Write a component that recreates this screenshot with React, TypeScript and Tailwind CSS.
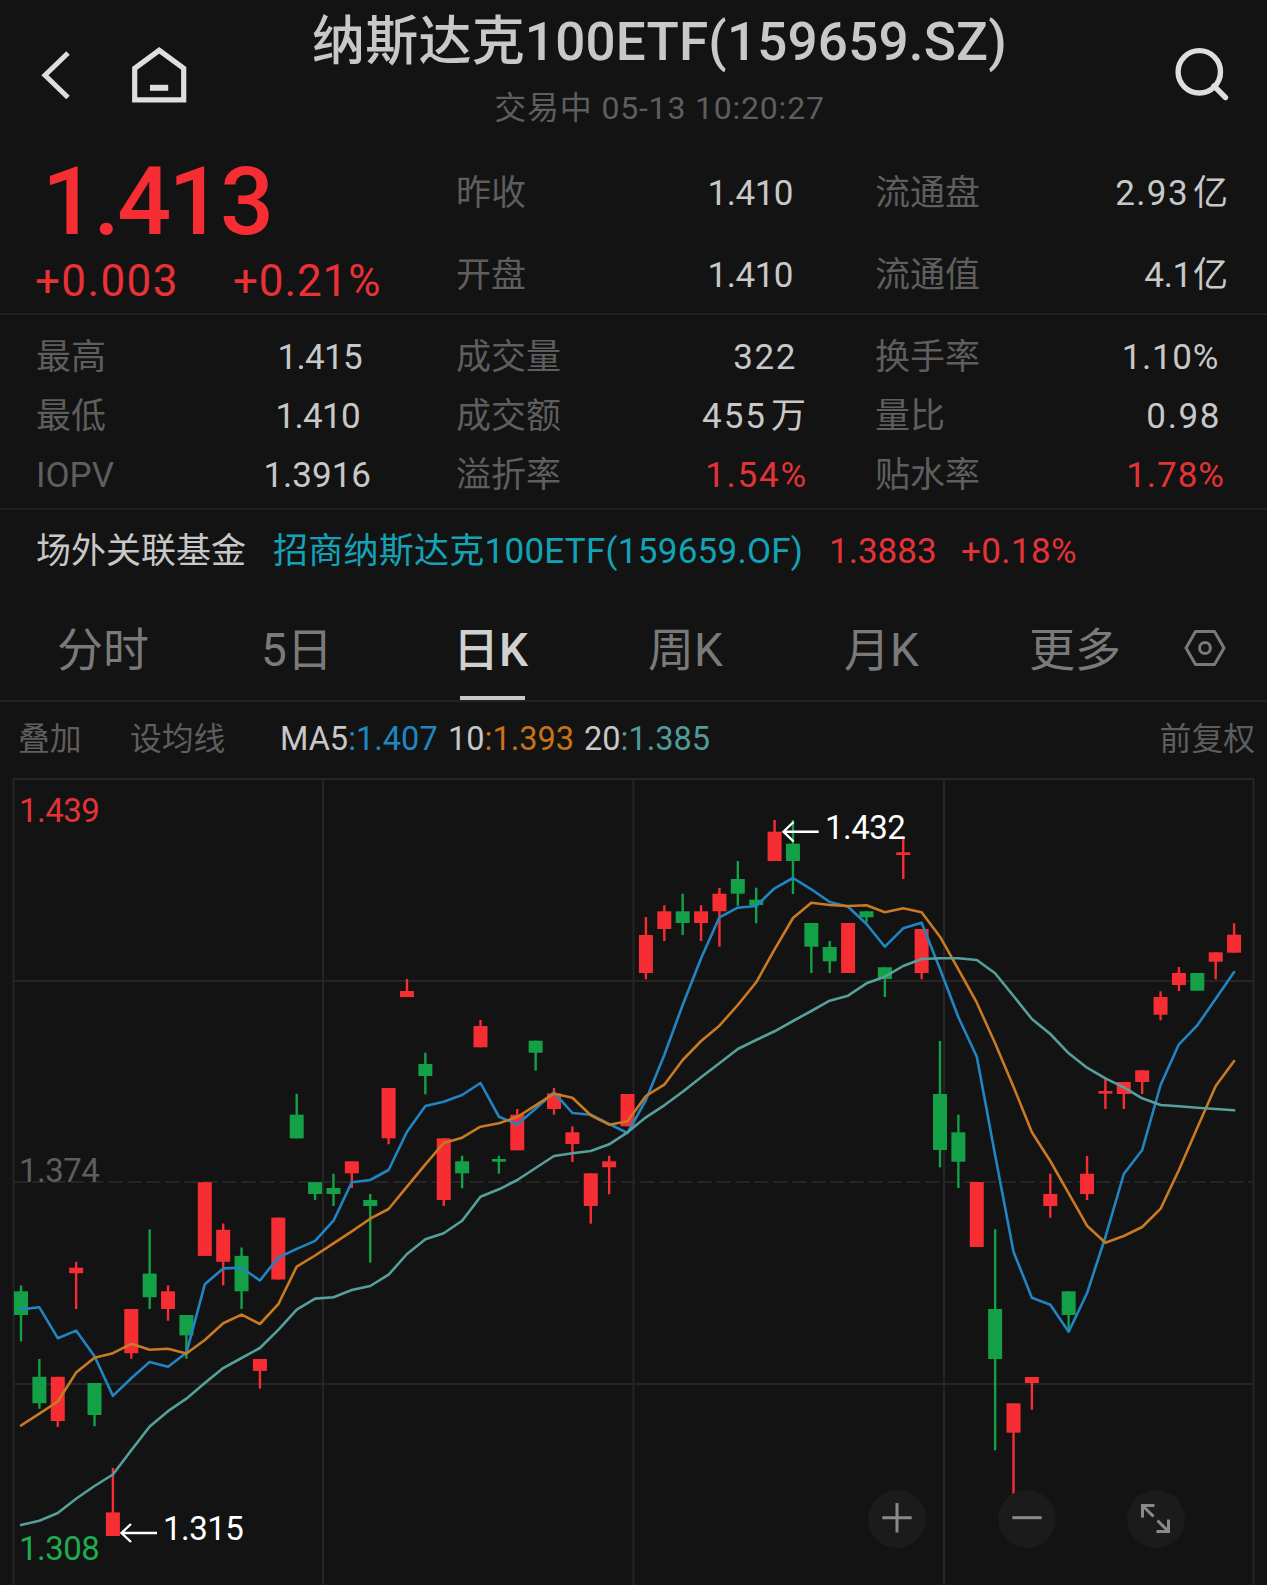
import { clsx } from "clsx";

type Tone = "plain" | "up";

interface Quote {
    label: string;
    value: string;
    unit?: string;
    unitGap?: string;
    tone?: Tone;
    pad: string;
    tracking?: string;
}

// Two rows next to the last price
const mainQuotes: Quote[] = [
    { label: "昨收", value: "1.410", pad: "pr-[82px]", tracking: "tracking-[-0.5px]" },
    { label: "流通盘", value: "2.93", unit: "亿", unitGap: "ml-[4px]", pad: "pr-[39px]", tracking: "tracking-[1.4px]" },
    { label: "开盘", value: "1.410", pad: "pr-[82px]", tracking: "tracking-[-0.5px]" },
    { label: "流通值", value: "4.1", unit: "亿", unitGap: "ml-px", pad: "pr-[39px]", tracking: "tracking-[-0.3px]" },
];

const detailQuotes: Quote[] = [
    { label: "最高", value: "1.415", pad: "pr-[94px]", tracking: "tracking-[-0.7px]" },
    { label: "成交量", value: "322", pad: "pr-[78px]", tracking: "tracking-[1.6px]" },
    { label: "换手率", value: "1.10%", pad: "pr-[48px]", tracking: "tracking-[0.7px]" },
    { label: "最低", value: "1.410", pad: "pr-[96px]", tracking: "tracking-[-0.7px]" },
    { label: "成交额", value: "455", unit: "万", unitGap: "ml-[4px]", pad: "pr-[69px]", tracking: "tracking-[2px]" },
    { label: "量比", value: "0.98", pad: "pr-[46px]", tracking: "tracking-[1.6px]" },
    { label: "IOPV", value: "1.3916", pad: "pr-[85px]" },
    { label: "溢折率", value: "1.54%", tone: "up", pad: "pr-[67px]", tracking: "tracking-[1.8px]" },
    { label: "贴水率", value: "1.78%", tone: "up", pad: "pr-[42px]", tracking: "tracking-[1px]" },
];

const tabs = [
    { label: "分时", width: "w-[204px]" },
    { label: "5日", width: "w-[195px]" },
    { label: "日K", width: "w-[192px]", active: true },
    { label: "周K", width: "w-[196px]" },
    { label: "月K", width: "w-[185px]" },
    { label: "更多", width: "w-[154px]" },
];

const RED = "#f62d33";
const GREEN = "#14a046";

// [rising, high, body top, body bottom, low]
type Candle = [number, number, number, number, number];

const candles: Candle[] = [
    [0, 1285.4, 1291.3, 1315, 1341.4],
    [0, 1359, 1376.8, 1403.2, 1408.8],
    [1, 1376.8, 1376.8, 1421, 1426.9],
    [1, 1261.8, 1267.7, 1273.2, 1309],
    [0, 1383, 1383, 1415, 1426.2],
    [1, 1467.9, 1512.4, 1536, 1536],
    [1, 1309, 1309, 1353.2, 1358.7],
    [0, 1229.4, 1273.6, 1297.2, 1309],
    [1, 1285.4, 1291.3, 1309, 1320.8],
    [0, 1315, 1315, 1335.4, 1358.7],
    [1, 1182.2, 1182.2, 1255.9, 1255.9],
    [1, 1223.5, 1229.8, 1261.8, 1285.4],
    [0, 1247.5, 1255.9, 1291.3, 1309],
    [1, 1359, 1359, 1370.9, 1388.6],
    [1, 1217.6, 1217.6, 1279.5, 1279.5],
    [0, 1093.9, 1114.7, 1138.4, 1138.4],
    [0, 1182.2, 1182.2, 1194, 1199.9],
    [0, 1173.7, 1188, 1194, 1206],
    [1, 1161.3, 1161.3, 1173.3, 1188],
    [0, 1194, 1200, 1206, 1262.7],
    [1, 1088, 1088, 1138.3, 1144.3],
    [1, 979, 991, 997, 997],
    [0, 1052.7, 1064, 1076, 1094.3],
    [1, 1138.3, 1138.3, 1200, 1206],
    [0, 1155.7, 1161.3, 1173.3, 1188.3],
    [1, 1020, 1026, 1047.3, 1047.3],
    [0, 1155.7, 1159, 1161.7, 1173.7],
    [1, 1109, 1114.7, 1150.3, 1150.3],
    [0, 1040.7, 1040.7, 1052.7, 1070.7],
    [1, 1088, 1093.3, 1109, 1114.7],
    [1, 1126.3, 1132.3, 1144, 1162],
    [1, 1173.3, 1173.3, 1206, 1223.7],
    [1, 1155.7, 1161.3, 1167.3, 1194.3],
    [1, 1094, 1094, 1126.3, 1126.3],
    [1, 917, 935, 973, 979.3],
    [1, 905.3, 911.3, 929, 941],
    [0, 893.7, 911.3, 923, 935],
    [1, 905.3, 911.3, 923, 941],
    [1, 888, 893.7, 911.3, 946.7],
    [0, 861, 879, 893.7, 905.7],
    [0, 887.7, 899.7, 905, 923.3],
    [1, 820, 831.7, 861, 861],
    [0, 820, 843.7, 861, 894],
    [0, 923, 923, 946.7, 973],
    [0, 941, 947, 961.3, 973],
    [1, 923, 923, 973, 973],
    [0, 911.3, 911.3, 917.3, 922.3],
    [0, 967.3, 967.3, 979, 997],
    [1, 836.7, 852.3, 855, 879],
    [1, 929, 929, 973, 979.3],
    [0, 1041, 1094, 1150, 1167.3],
    [0, 1114.7, 1132.3, 1161.7, 1188],
    [1, 1182, 1182, 1247, 1247],
    [0, 1229.3, 1309, 1359, 1450.3],
    [1, 1403.3, 1403.3, 1432.7, 1494],
    [1, 1377, 1377, 1383, 1409.7],
    [1, 1173.7, 1194, 1206, 1217.7],
    [0, 1291.3, 1291.3, 1315, 1330],
    [1, 1156, 1173.7, 1194, 1200],
    [1, 1078.3, 1091, 1093.7, 1109],
    [1, 1082, 1082, 1094, 1109],
    [1, 1070.3, 1070.3, 1082, 1094],
    [1, 991.3, 997, 1014.7, 1020.3],
    [1, 967, 973, 985, 991],
    [0, 973, 973, 990.7, 990.7],
    [1, 952.3, 952.3, 961.7, 979.3],
    [1, 923.3, 934.7, 952.7, 952.7],
];

const ma5 = [
    1309.4, 1307.3, 1338.2, 1330.6, 1356.3, 1395.9, 1378.2, 1361.9, 1366.7, 1352.8, 1284.3, 1268.4, 1267.7, 1280.5,
    1257.6, 1248.9, 1240.9, 1220.7, 1182.3, 1180, 1170, 1131.7, 1106, 1101.7, 1095, 1083, 1116.7, 1124.3, 1108.7,
    1092.3, 1113, 1114.7, 1124, 1133, 1100, 1055, 1005, 958.3, 917.3, 907.7, 906, 888.3, 878, 889.3, 902, 906.7, 924,
    946.7, 928.3, 922.7, 969, 1017.3, 1056.7, 1155, 1251.7, 1297.7, 1304.7, 1331.7, 1293.3, 1237, 1174, 1150, 1085,
    1044.3, 1025.3, 998.7, 972,
];

const ma10 = [
    1425.5, 1413.7, 1401.5, 1372.6, 1357.7, 1353.2, 1343.8, 1349.7, 1348.7, 1353.5, 1340, 1323.3, 1314.6, 1324,
    1304.2, 1266.6, 1255.5, 1243.3, 1231.3, 1218.7, 1209, 1186.7, 1164.3, 1143, 1137.7, 1126.7, 1123.3, 1117, 1105.3,
    1093.7, 1097.7, 1115.3, 1124.7, 1121.3, 1096, 1084.7, 1060, 1041, 1025.7, 1005, 982.3, 949.3, 918, 902.7, 905, 906,
    905.3, 912.3, 908.3, 912.3, 936.7, 969.3, 1002.7, 1043.3, 1086.7, 1132.3, 1161, 1193.3, 1225.7, 1242.7, 1236, 1227,
    1208.7, 1170, 1127.7, 1086, 1061,
];

const ma20 = [
    1524.9, 1520.7, 1513, 1498.8, 1486, 1474.5, 1450.2, 1426.5, 1411.2, 1398.7, 1383, 1368.1, 1358, 1348, 1329.9,
    1309.7, 1298.6, 1297.3, 1290, 1286, 1274.7, 1254, 1239.3, 1233.3, 1220.7, 1196.7, 1189.3, 1180, 1168, 1156, 1153.3,
    1151, 1144.3, 1132.3, 1117.3, 1105.3, 1091.7, 1077.3, 1063.3, 1049, 1040, 1031.3, 1021, 1011, 1000.7, 995.7, 983.3,
    976.7, 966, 959, 958.3, 958.3, 960, 973.3, 996, 1019, 1034, 1053.3, 1067.7, 1078.3, 1087.3, 1098.3, 1105, 1106.3,
    1107.7, 1109, 1110.3,
];

const xAt = (i: number) => 21 + i * 18.38;
const toPoints = (ys: number[]) => ys.map((y, i) => `${xAt(i).toFixed(1)},${y}`).join(" ");

function Header() {
    return (
        <header className="h-[150px] flex justify-between">
            <div className="w-[260px] flex pt-[44px] pl-[38px]">
                <svg width="36" height="62" viewBox="38 44 36 62" fill="none" stroke="#dedede" strokeWidth="5">
                    <path d="M68 53 L45 75.3 L68 97.5" />
                </svg>
                <svg className="ml-[54px]" width="62" height="62" viewBox="128 44 62 62" fill="none" stroke="#dedede">
                    <path d="M134.7 99.8 V68.3 L159.2 50.3 L183.7 68.3 V99.8 Z" strokeWidth="5.2" />
                    <path d="M150 87.8 H168.2" strokeWidth="6" />
                </svg>
            </div>
            <div className="flex flex-col items-center ml-[26px]">
                <h1 className="h-[82px] leading-[85px] text-[53px] font-medium tracking-[0.2px] text-[#c8c8c8] whitespace-nowrap">
                    纳斯达克100ETF(159659.SZ)
                </h1>
                <div className="h-[50px] leading-[52px] text-[32px] tracking-[0.8px] text-[#5e5e5e] whitespace-nowrap">
                    交易中 05-13 10:20:27
                </div>
            </div>
            <div className="w-[234px] flex justify-end pt-[44px] pr-[34px]">
                <svg width="62" height="62" viewBox="1171 44 62 62" fill="none" stroke="#dedede" strokeWidth="5.4">
                    <circle cx="1199.3" cy="71.8" r="21.2" />
                    <path d="M1214 86 L1225.5 97.5" strokeLinecap="round" />
                </svg>
            </div>
        </header>
    );
}

function QuoteCell({ quote }: { quote: Quote }) {
    return (
        <div className={clsx("flex items-center justify-between whitespace-nowrap", quote.pad)}>
            <span className="text-[#5e5e5e]">{quote.label}</span>
            <span className={clsx(quote.tracking, quote.tone === "up" ? "text-[#e33338]" : "text-[#c8c8c8]")}>
                {quote.value}
                {quote.unit && <span className={clsx("tracking-normal", quote.unitGap)}>{quote.unit}</span>}
            </span>
        </div>
    );
}

function PriceSummary() {
    return (
        <section className="h-[165px] flex border-b-2 border-[#202020]">
            <div className="w-[456px] text-[#f62d33]">
                <div className="h-[100px] leading-[103px] pl-[42px] text-[95px] font-medium tracking-[-2.6px]">1.413</div>
                <div className="flex h-[62px] leading-[62px] text-[44px] tracking-[1.4px] text-[#ea3136]">
                    <span className="w-[197px] pl-[35px]">+0.003</span>
                    <span className="pl-[36px] tracking-[0.9px]">+0.21%</span>
                </div>
            </div>
            <div className="flex-1 grid grid-cols-[419px_1fr] auto-rows-[82px] pt-[3px] text-[35px]">
                {mainQuotes.map((quote) => (
                    <QuoteCell key={quote.label} quote={quote} />
                ))}
            </div>
        </section>
    );
}

function Details() {
    return (
        <section className="h-[195px] pt-[14px] pl-[36px] grid grid-cols-[420px_419px_1fr] auto-rows-[59px] text-[35px] border-b-2 border-[#202020]">
            {detailQuotes.map((quote) => (
                <QuoteCell key={quote.label} quote={quote} />
            ))}
        </section>
    );
}

function RelatedFund() {
    return (
        <section className="h-[80px] leading-[84px] pl-[36px] flex text-[35px] whitespace-nowrap">
            <span className="w-[237px] text-[#c8c8c8]">场外关联基金</span>
            <span className="w-[556px] tracking-[0.26px] text-[#13a3b7]">招商纳斯达克100ETF(159659.OF)</span>
            <span className="w-[132px] text-[#e33338]">1.3883</span>
            <span className="tracking-[0.4px] text-[#e33338]">+0.18%</span>
        </section>
    );
}

function Tabs() {
    return (
        <nav className="h-[112px] pl-[57px] flex border-b-2 border-[#222222] text-[46px] text-[#7a7a7a] whitespace-nowrap">
            {tabs.map((tab) => (
                <div key={tab.label} className={clsx("flex flex-col justify-between", tab.width)}>
                    <span
                        className={clsx("h-[104px] leading-[120px]", tab.active && "-ml-[3px] font-medium text-[#d0d0d0]")}
                    >
                        {tab.label}
                    </span>
                    {tab.active && <span className="h-1 w-[65px] ml-[4px] bg-[#c8c8c8]" />}
                </div>
            ))}
            <svg className="mt-[36px]" width="44" height="44" viewBox="0 0 44 44" fill="none" stroke="#7a7a7a" strokeWidth="3">
                <path d="M12.5 5.5 H31.5 L41 22 L31.5 38.5 H12.5 L3 22 Z" strokeLinejoin="round" />
                <circle cx="22" cy="22" r="5.4" />
            </svg>
        </nav>
    );
}

function Averages() {
    return (
        <div className="h-[76px] leading-[75px] pl-[18px] pr-[12px] flex text-[31.8px] text-[#5e5e5e] whitespace-nowrap">
            <span className="w-[112px]">叠加</span>
            <span className="w-[150px]">设均线</span>
            <div className="flex text-[32.5px] text-[#c8c8c8]">
                <span className="w-[168px]">
                    MA5<span className="text-[#1e88c4]">:1.407</span>
                </span>
                <span className="w-[136px]">
                    10<span className="text-[#c97216]">:1.393</span>
                </span>
                <span>
                    20<span className="text-[#4f9c9a]">:1.385</span>
                </span>
            </div>
            <span className="ml-auto">前复权</span>
        </div>
    );
}

function KLineChart() {
    return (
        <svg className="block" width="1267" height="807" viewBox="0 778 1267 807" fontSize="33" letterSpacing="-0.5">
            <g stroke="#252525" strokeWidth="2" fill="none">
                <path d="M13.5 1585 V779 H1253.5 V1585" />
                <path d="M323 779 V1585 M633.5 779 V1585 M944 779 V1585" />
                <path d="M13.5 981 H1253.5 M13.5 1384 H1253.5" />
                <path d="M13.5 1182 H1253.5" strokeDasharray="14 5" />
            </g>

            <text x="19" y="1182" fill="#5e5e5e">1.374</text>

            {candles.map(([rising, high, top, bottom, low], i) => {
                const x = xAt(i);
                return (
                    <g key={i} fill={rising ? RED : GREEN}>
                        <rect x={x - 1.2} y={high} width="2.4" height={low - high} />
                        <rect x={x - 7} y={top} width="14" height={bottom - top} />
                    </g>
                );
            })}

            <g fill="none" strokeWidth="2.6" strokeLinejoin="round" strokeLinecap="round">
                <polyline points={toPoints(ma5)} stroke="#2185c4" />
                <polyline points={toPoints(ma10)} stroke="#c97a22" />
                <polyline points={toPoints(ma20)} stroke="#55a09b" />
            </g>

            <g fill="none" stroke="#ffffff" strokeWidth="2.4">
                <path d="M783 831.7 H818.7 M793.5 822 L783.5 831.7 L793.5 841.5" />
                <path d="M121 1533 H157 M131 1524 L121.5 1533 L131 1542" />
            </g>
            <text x="825" y="839" fill="#ffffff">1.432</text>
            <text x="163" y="1540" fill="#ffffff">1.315</text>
            <text x="19" y="822" fill="#e33338">1.439</text>
            <text x="19" y="1560" fill="#1eac4e">1.308</text>
        </svg>
    );
}

function ChartControls() {
    return (
        <div className="absolute right-[82px] bottom-[37px] flex gap-[71.5px]">
            <button className="size-[58px] rounded-full bg-[#1b1b1b]">
                <svg width="58" height="58" viewBox="0 0 58 58" fill="none" stroke="#8a8a8a" strokeWidth="3">
                    <path d="M14.3 27.7 H43.7 M29 13 V42.4" />
                </svg>
            </button>
            <button className="size-[58px] rounded-full bg-[#1b1b1b]">
                <svg width="58" height="58" viewBox="0 0 58 58" fill="none" stroke="#8a8a8a" strokeWidth="3">
                    <path d="M14.3 27.7 H43.7" />
                </svg>
            </button>
            <button className="size-[58px] rounded-full bg-[#1b1b1b]">
                <svg width="58" height="58" viewBox="0 0 58 58" fill="none" stroke="#8a8a8a" strokeWidth="3">
                    <path d="M15.5 27.5 V15.5 H27.5 M15.5 15.5 L26.5 26.5" />
                    <path d="M41.5 29.5 V41.5 H29.5 M41.5 41.5 L30.5 30.5" />
                </svg>
            </button>
        </div>
    );
}

export default function App() {
    return (
        <div className="relative w-[1267px] h-[1585px] overflow-hidden bg-[#131313] font-[Roboto,'Noto_Sans_CJK_SC',sans-serif]">
            <Header />
            <PriceSummary />
            <Details />
            <RelatedFund />
            <Tabs />
            <Averages />
            <KLineChart />
            <ChartControls />
        </div>
    );
}
